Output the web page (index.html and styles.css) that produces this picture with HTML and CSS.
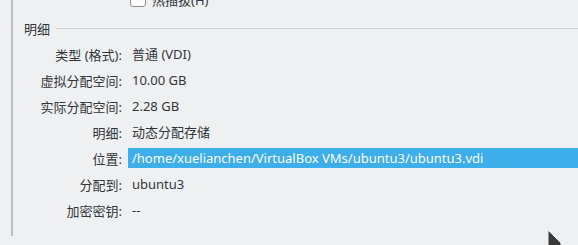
FILE: index.html
```html
<!DOCTYPE html>
<html lang="zh-CN">
<head>
    <meta charset="UTF-8">
    <title>存储详细信息</title>
    <link rel="stylesheet" href="styles.css">
</head>
<body>
    <div class="panel">
        <label class="hotplug">
            <span class="checkbox"></span>
            热插拔(H)
        </label>
        <div class="group-title">明细</div>
        <div class="details">
            <div class="label">类型 (格式):</div>
            <div class="value">普通 (VDI)</div>
            <div class="label">虚拟分配空间:</div>
            <div class="value">10.00 GB</div>
            <div class="label">实际分配空间:</div>
            <div class="value">2.28 GB</div>
            <div class="label">明细:</div>
            <div class="value">动态分配存储</div>
            <div class="label">位置:</div>
            <div class="value selected">/home/xuelianchen/VirtualBox VMs/ubuntu3/ubuntu3.vdi</div>
            <div class="label">分配到:</div>
            <div class="value">ubuntu3</div>
            <div class="label">加密密钥:</div>
            <div class="value">--</div>
        </div>
    </div>

    <svg class="cursor" xmlns="http://www.w3.org/2000/svg" width="14" height="16" viewBox="0 0 14 16">
        <polygon points="1,0 1,16 14,16 14,13" fill="#3a3a3a" stroke="#f2f2f2" stroke-width="1"></polygon>
    </svg>
</body>
</html>
```

FILE: styles.css
```css
body {
    margin: 0;
    height: 245px;
    overflow: hidden;
    background-color: #eff0f1;
    color: #31363b;
    font-family: "Noto Sans", "Noto Sans CJK SC", sans-serif;
    font-size: 13px;
    position: relative;
}
.panel {
    margin-left: 11px;
    height: 245px;
    border-left: 2px solid #bcbec1;
}
.hotplug {
    display: flex;
    align-items: center;
    gap: 6px;
    height: 16px;
    margin-top: -9px;
    padding-left: 117px;
}
.checkbox {
    width: 14px;
    height: 14px;
    border: 1px solid #8b8e91;
    border-radius: 3px;
    background-color: #fcfcfc;
}
.group-title {
    display: flex;
    align-items: center;
    height: 18px;
    line-height: 18px;
    margin-top: 13px;
    padding-left: 11px;
}
.group-title::after {
    content: "";
    flex: 1;
    height: 1px;
    margin-left: 6px;
    margin-top: -2px;
    background-color: #cfd1d3;
}
.details {
    display: grid;
    grid-template-columns: 109px 1fr;
    grid-auto-rows: 26px;
    column-gap: 6px;
    align-items: center;
    margin-top: 3px;
}
.label {
    text-align: right;
    white-space: nowrap;
}
.value {
    height: 20px;
    line-height: 20px;
    padding-left: 4px;
    white-space: nowrap;
}
.selected {
    background-color: #3daee9;
    color: #fcfcfc;
}
.cursor {
    position: absolute;
    left: 547px;
    top: 230px;
}
```
